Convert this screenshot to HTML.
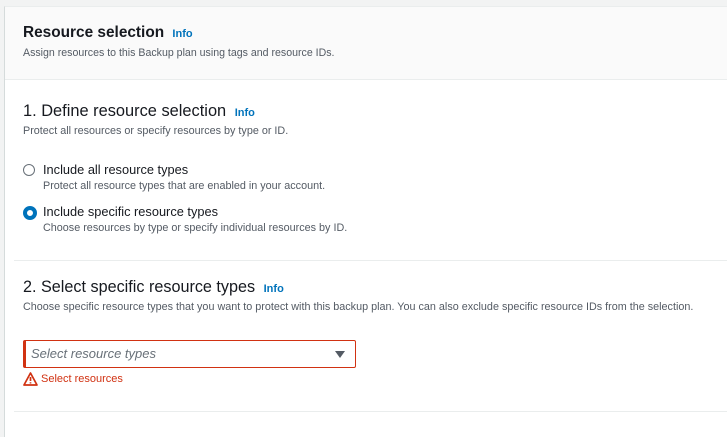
<!DOCTYPE html>
<html><head><style>
body{margin:0;width:727px;height:419px;background:#f2f3f3;font-family:"Liberation Sans",sans-serif;overflow:hidden;position:relative}
.panel{position:absolute;left:4px;top:6px;width:740px;height:430px;background:#fff;border-left:1px solid #d5dbdb;border-top:1px solid #eaeded}
.hdr{position:absolute;left:0;top:0;right:0;height:72px;background:#fafafa;border-bottom:1px solid #eaeded}
.t{position:absolute;white-space:nowrap}
.info{color:#0073bb;font-weight:bold;font-size:11px}
.sub{font-size:10.8px;color:#545b64}
.h2{font-size:16.4px;color:#16191f}
.lab{font-size:13px;color:#16191f}
.line{position:absolute;height:1px;background:#eaeded}
</style></head><body>
<div class="panel">
<div class="hdr"></div>
</div>
<div class="t" style="left:23px;top:24px;font-size:15.4px;font-weight:bold;color:#16191f">Resource selection <span class="info" style="margin-left:4px">Info</span></div>
<div class="t sub" style="left:23px;top:47px;font-size:10.6px">Assign resources to this Backup plan using tags and resource IDs.</div>
<div class="t h2" style="left:23px;top:102px">1. Define resource selection <span class="info" style="margin-left:4px">Info</span></div>
<div class="t sub" style="left:23px;top:125px">Protect all resources or specify resources by type or ID.</div>
<div style="position:absolute;left:23px;top:164px;width:10px;height:10px;border:1.5px solid #687078;border-radius:50%"></div>
<div class="t lab" style="left:43px;top:162px;font-size:12.8px">Include all resource types</div>
<div class="t sub" style="left:43px;top:180px">Protect all resource types that are enabled in your account.</div>
<div style="position:absolute;left:23px;top:206px;width:6px;height:6px;border:4px solid #0073bb;border-radius:50%;background:#fff"></div>
<div class="t lab" style="left:43px;top:204px;font-size:12.8px">Include specific resource types</div>
<div class="t sub" style="left:43px;top:222px">Choose resources by type or specify individual resources by ID.</div>
<div class="line" style="left:14px;top:260px;width:713px"></div>
<div class="t h2" style="left:23px;top:278px;font-size:16.2px">2. Select specific resource types <span class="info" style="margin-left:4px">Info</span></div>
<div class="t sub" style="left:23px;top:301px">Choose specific resource types that you want to protect with this backup plan. You can also exclude specific resource IDs from the selection.</div>
<div style="position:absolute;left:23px;top:340px;width:329px;height:26px;border:1px solid #d13212;border-left:3px solid #d13212;border-radius:2px"></div>
<div class="t" style="left:31px;top:346px;font-size:13px;font-style:italic;color:#687078">Select resource types</div>
<div style="position:absolute;left:335px;top:351px;width:0;height:0;border-left:5px solid transparent;border-right:5px solid transparent;border-top:7px solid #545b64"></div>
<svg style="position:absolute;left:23px;top:372px" width="15" height="14" viewBox="0 0 15 14"><path d="M7.5 1L1 13h13z" fill="none" stroke="#d13212" stroke-width="1.7" stroke-linejoin="round"/><path d="M7.5 5v4M7.5 10.3v1.2" stroke="#d13212" stroke-width="1.7"/></svg>
<div class="t" style="left:41px;top:373px;font-size:11px;color:#d13212">Select resources</div>
<div class="line" style="left:14px;top:411px;width:713px"></div>
</body></html>
